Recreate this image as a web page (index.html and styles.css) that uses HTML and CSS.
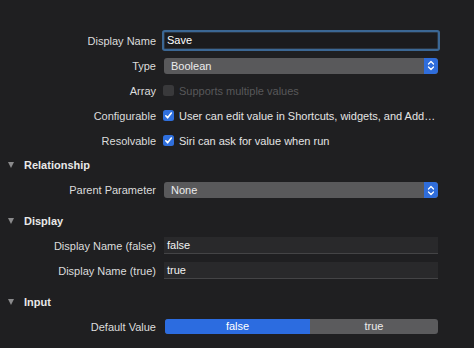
FILE: index.html
```html
<!DOCTYPE html>
<html lang="en">
<head>
<meta charset="UTF-8">
<meta name="viewport" content="width=device-width, initial-scale=1.0">
<title>Parameter Inspector</title>
<link rel="stylesheet" href="styles.css">
</head>
<body>

<div class="inspector">
  <div class="row">
    <div class="label">Display Name</div>
    <div class="field focused">Save</div>
  </div>
  <div class="row">
    <div class="label">Type</div>
    <div class="popup">
      <span>Boolean</span>
      <span class="stepper">
        <svg width="8" height="11" viewBox="0 0 8 11"><path d="M1.5 4 L4 1.5 L6.5 4 M1.5 7 L4 9.5 L6.5 7" fill="none" stroke="#fff" stroke-width="1.3" stroke-linecap="round" stroke-linejoin="round"/></svg>
      </span>
    </div>
  </div>
  <div class="row">
    <div class="label">Array</div>
    <div class="check disabled"><span class="box"></span>Supports multiple values</div>
  </div>
  <div class="row">
    <div class="label">Configurable</div>
    <div class="check"><span class="box"><svg width="11" height="11" viewBox="0 0 11 11"><path d="M2.8 5.8 L4.6 7.8 L8.3 3" fill="none" stroke="#fff" stroke-width="1.6" stroke-linecap="round" stroke-linejoin="round"/></svg></span>User can edit value in Shortcuts, widgets, and Add…</div>
  </div>
  <div class="row">
    <div class="label">Resolvable</div>
    <div class="check"><span class="box"><svg width="11" height="11" viewBox="0 0 11 11"><path d="M2.8 5.8 L4.6 7.8 L8.3 3" fill="none" stroke="#fff" stroke-width="1.6" stroke-linecap="round" stroke-linejoin="round"/></svg></span>Siri can ask for value when run</div>
  </div>

  <div class="section-header"><span class="disclosure"></span>Relationship</div>
  <div class="row tall">
    <div class="label">Parent Parameter</div>
    <div class="popup">
      <span>None</span>
      <span class="stepper">
        <svg width="8" height="11" viewBox="0 0 8 11"><path d="M1.5 4 L4 1.5 L6.5 4 M1.5 7 L4 9.5 L6.5 7" fill="none" stroke="#fff" stroke-width="1.3" stroke-linecap="round" stroke-linejoin="round"/></svg>
      </span>
    </div>
  </div>

  <div class="section-header spaced"><span class="disclosure"></span>Display</div>
  <div class="row">
    <div class="label">Display Name (false)</div>
    <div class="field">false</div>
  </div>
  <div class="row">
    <div class="label">Display Name (true)</div>
    <div class="field">true</div>
  </div>

  <div class="section-header spaced wide"><span class="disclosure"></span>Input</div>
  <div class="row">
    <div class="label">Default Value</div>
    <div class="segmented">
      <div class="segment selected">false</div>
      <div class="segment">true</div>
    </div>
  </div>
</div>

</body>
</html>
```

FILE: styles.css
```css
body {
  font-family: 'Liberation Sans', Arial, Helvetica, sans-serif;
  font-size: 11px;
  background-color: #1f1f21;
  color: #dcdcdc;
  margin: 0;
  height: 348px;
  overflow: hidden;
}
.inspector {
  padding-top: 28px;
}
.row {
  display: flex;
  align-items: center;
  height: 25px;
}
.row.tall {
  height: 26px;
}
.label {
  width: 156px;
  text-align: right;
  flex-shrink: 0;
}
.field {
  margin-left: 8px;
  width: 274px;
  height: 17px;
  line-height: 17px;
  box-sizing: border-box;
  padding-left: 3px;
  background-color: #29292b;
  border-bottom: 1px solid #444446;
  color: #f2f2f2;
}
.field.focused {
  background-color: #1b1b1d;
  border: 1px solid #2a3440;
  line-height: 15px;
  padding-left: 2px;
  box-shadow: 0 0 0 2px #3b6794;
  border-radius: 1px;
  color: #fff;
}
.popup {
  margin-left: 8px;
  width: 274px;
  height: 16px;
  display: flex;
  align-items: center;
  justify-content: space-between;
  background-color: #59595b;
  border-radius: 3px;
  padding-left: 7px;
  box-sizing: border-box;
  color: #ececec;
  overflow: hidden;
}
.stepper {
  width: 14px;
  height: 16px;
  background-color: #2f6ddb;
  display: flex;
  align-items: center;
  justify-content: center;
  border-radius: 0 3px 3px 0;
}
.check {
  margin-left: 7px;
  display: flex;
  align-items: center;
  white-space: nowrap;
  color: #e4e4e4;
}
.check .box {
  width: 11px;
  height: 11px;
  border-radius: 2.5px;
  background-color: #2f6fdd;
  margin-right: 5px;
  display: flex;
}
.check.disabled {
  color: #58585a;
}
.check.disabled .box {
  background-color: #39393b;
}
.section-header {
  height: 24px;
  display: flex;
  align-items: center;
  font-weight: bold;
  color: #e8e8e8;
  padding-left: 8px;
}
.section-header.spaced {
  margin-top: 6px;
}
.section-header.wide {
  margin-top: 7px;
}
.disclosure {
  width: 0;
  height: 0;
  border-left: 3.5px solid transparent;
  border-right: 3.5px solid transparent;
  border-top: 6px solid #8a8a8c;
  margin-right: 10px;
}
.segmented {
  margin-left: 9px;
  width: 273px;
  height: 15px;
  display: flex;
  border-radius: 3px;
  overflow: hidden;
  background-color: #5b5b5d;
}
.segment {
  flex: 1;
  text-align: center;
  line-height: 15px;
  color: #ececec;
}
.segment.selected {
  flex: 0 0 145px;
  background-color: #2c6ce0;
  color: #fff;
}
```
